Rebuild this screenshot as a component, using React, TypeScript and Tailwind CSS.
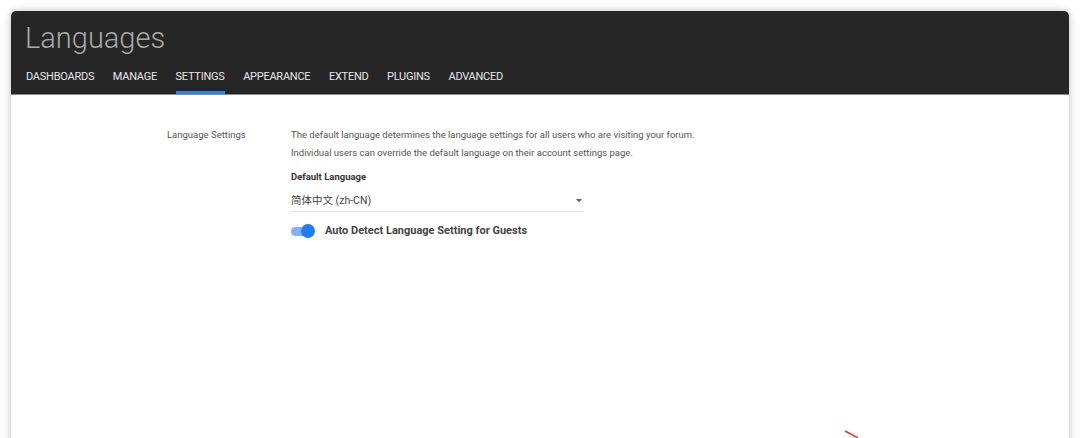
import React from 'react';

const tabs = ['DASHBOARDS', 'MANAGE', 'SETTINGS', 'APPEARANCE', 'EXTEND', 'PLUGINS', 'ADVANCED'];

export default function App() {
  return (
    <div className="relative h-[438px] w-[1080px] overflow-hidden bg-white pl-[11px] pt-[11px] font-['Roboto','Noto_Sans_CJK_SC',sans-serif]">
      <div className="h-[500px] w-[1058px] overflow-hidden rounded-t-[5px] bg-white shadow-[0_0_8px_rgba(0,0,0,0.25)]">
        {/* Header */}
        <div className="h-[84px] border-b border-[#8a8a8a] bg-[#262626] px-[14px]">
          <h1 className="pt-[9px] text-[29px] font-light leading-[36px] text-[#a9a9a9]">Languages</h1>
          <nav className="mt-[14px] flex gap-[18.6px] pl-px">
            {tabs.map((t) => (
              <div key={t} className="flex flex-col">
                <span className="text-[11px] leading-[14px] tracking-[-0.25px] text-[#e6e6e6]">{t}</span>
                <span className={`mt-[7px] h-[3px] ${t === 'SETTINGS' ? 'bg-[#2f80ef]' : 'bg-transparent'}`} />
              </div>
            ))}
          </nav>
        </div>

        {/* Body */}
        <div className="flex pt-[31px]">
          <div className="w-[124px] shrink-0 pl-[156px] box-content text-[9.5px] leading-[18px] text-[#555]">
            Language Settings
          </div>
          <div className="w-[420px] text-[#555]">
            <p className="text-[9.5px] leading-[18px]">
              The default language determines the language settings for all users who are visiting your forum.
              <br />
              Individual users can override the default language on their account settings page.
            </p>
            <div className="mt-[8px] text-[9.5px] font-bold leading-[14px] text-[#333]">Default Language</div>
            <div className="mt-[8px] flex h-[20px] w-[293px] items-center justify-between border-b border-[#e2e2e2] pb-[2px]">
              <span className="text-[10.5px] text-[#444]">简体中文 (zh-CN)</span>
              <svg width="6" height="4" viewBox="0 0 6 4" className="mr-[2px]">
                <path d="M0 0h6L3 3.5z" fill="#666" />
              </svg>
            </div>
            <div className="mt-[11px] flex items-center gap-[10px]">
              <div className="relative h-[12px] w-[24px]">
                <div className="absolute left-0 top-[2px] h-[9px] w-[22px] rounded-full bg-[#7fb3f5]" />
                <div className="absolute right-0 top-[-1px] h-[14px] w-[14px] rounded-full bg-[#1f7ff0]" />
              </div>
              <span className="text-[11px] font-bold text-[#444]">Auto Detect Language Setting for Guests</span>
            </div>
          </div>
        </div>
      </div>

      {/* red annotation stroke */}
      <svg className="absolute left-[844px] top-[430px]" width="20" height="10" viewBox="0 0 20 10">
        <path d="M1 1L14 8" stroke="#f03030" strokeWidth="1.5" />
      </svg>
    </div>
  );
}
